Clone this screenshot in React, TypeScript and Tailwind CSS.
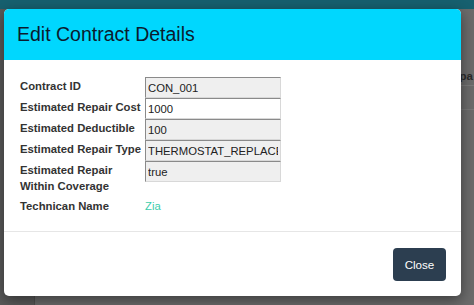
import React from 'react';

interface Field {
  label: string;
  value: string;
  editable?: boolean;
}

const fields: Field[] = [
  { label: 'Contract ID', value: 'CON_001' },
  { label: 'Estimated Repair Cost', value: '1000', editable: true },
  { label: 'Estimated Deductible', value: '100' },
  { label: 'Estimated Repair Type', value: 'THERMOSTAT_REPLACEMENT' },
  { label: 'Estimated Repair Within Coverage', value: 'true' },
];

export default function App() {
  return (
    <div className="relative h-[305px] w-[474px] overflow-hidden bg-[#6b6b6b] font-['Liberation_Sans',Arial,sans-serif]">
      {/* page behind the backdrop */}
      <div className="h-[9px] bg-[#17606f]" />
      <div className="flex h-[296px]">
        <div className="w-[35px] bg-[#5a5a5a] border-r border-[#4f4f4f]" />
        <div className="flex-1 pt-[58px]">
          <div className="h-[19px] border-b border-[#7a7a7a] pr-[1px] text-right text-[11.5px] font-bold leading-[19px] text-[#2a2a2a] whitespace-nowrap">
            Est. Repa
          </div>
          <div className="h-[24px] border-b border-[#777]" />
        </div>
      </div>

      {/* modal */}
      <div className="absolute left-[4px] top-[9px] w-[457px] overflow-hidden rounded-[5px] bg-white shadow-[0_4px_14px_rgba(0,0,0,0.45)]">
        <div className="flex h-[51px] items-center bg-[#00d7fe] pl-[13px]">
          <h1 className="text-[19.5px] text-[#0b1b2e]">Edit Contract Details</h1>
        </div>

        <div className="h-[172px] border-b border-[#e6e6e6] pl-[16px] pt-[17px]">
          {fields.map(f => (
            <div key={f.label} className="flex items-start">
              <div className="w-[125px] pr-[1px] pt-[1px] text-[11.3px] font-bold leading-[16px] text-[#333]">{f.label}</div>
              <input
                readOnly
                value={f.value}
                className={`h-[21px] w-[136px] border border-t-[#8a8a8a] border-l-[#8a8a8a] border-r-[#d8d8d8] border-b-[#d8d8d8] px-[2px] text-[11.3px] text-[#222] outline-none ${f.editable ? 'bg-white' : 'bg-[#efefef]'}`}
              />
            </div>
          ))}
          <div className="mt-[4px] flex">
            <div className="w-[125px] text-[11.3px] font-bold leading-[16px] text-[#333]">Technican Name</div>
            <div className="text-[11.3px] leading-[16px] text-[#3ccdac]">Zia</div>
          </div>
        </div>

        <div className="flex justify-end pb-[15px] pr-[15px] pt-[16px]">
          <button className="h-[33px] w-[53px] rounded-[4px] bg-[#2c3e50] text-[11.6px] text-white">Close</button>
        </div>
      </div>
    </div>
  );
}
